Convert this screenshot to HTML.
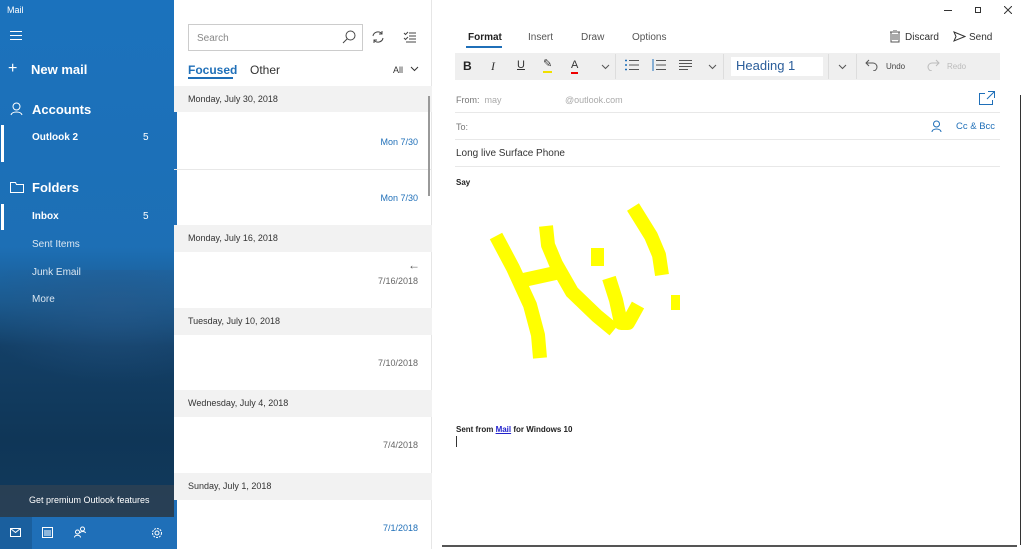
<!DOCTYPE html>
<html><head><meta charset="utf-8"><style>
*{margin:0;padding:0;box-sizing:border-box}
body{width:1024px;height:549px;overflow:hidden;font-family:"Liberation Sans",sans-serif;background:#fff;position:relative}
.a{position:absolute}
#nav{left:0;top:0;width:174px;height:549px;background:linear-gradient(180deg,#1b72bd 0%,#1d6fb5 45%,#1a5a8f 55%,#133f66 63%,#0f3657 80%,#123b5e 100%);color:#fff;overflow:hidden}
#nav .a{white-space:nowrap}
#list{left:174px;top:0;width:258px;height:549px;background:#fff;border-right:1px solid #e6e6e6}
.hdr{position:absolute;left:0;width:258px;background:#f2f2f2;font-size:9px;color:#333;padding-left:14px}
.date{position:absolute;right:13px;font-size:9px;color:#666}
.sep{position:absolute;left:0;width:258px;height:1px;background:#e8e8e8}
</style></head><body>
<div id="nav" class="a">
 <div class="a" style="left:-40px;top:270px;width:260px;height:120px;background:radial-gradient(ellipse at 60% 30%,rgba(40,90,140,.6) 0%,rgba(20,60,100,0) 65%)"></div>
 <div class="a" style="left:7px;top:5px;font-size:9px">Mail</div>
 <div class="a" style="left:10px;top:31px;width:12px;height:1px;background:#fff;box-shadow:0 4px 0 #fff,0 8px 0 #fff"></div>
 <div class="a" style="left:8px;top:60px;font-size:16px;font-weight:300">+</div>
 <div class="a" style="left:31px;top:62px;font-size:13px;font-weight:bold">New mail</div>
 <svg class="a" style="left:10px;top:102px" width="13" height="14"><circle cx="6.5" cy="4.5" r="3.5" fill="none" stroke="#fff"/><path d="M1 13c1-4 10-4 11 0" fill="none" stroke="#fff"/></svg>
 <div class="a" style="left:32px;top:102px;font-size:13px;font-weight:bold">Accounts</div>
 <div class="a" style="left:1px;top:125px;width:3px;height:37px;background:#fff"></div>
 <div class="a" style="left:32px;top:132px;font-size:10px;font-weight:bold">Outlook 2</div>
 <div class="a" style="left:143px;top:132px;font-size:10px">5</div>
 <svg class="a" style="left:10px;top:181px" width="14" height="12"><path d="M.5 1.5h5l1 2h7v8H.5z" fill="none" stroke="#fff"/></svg>
 <div class="a" style="left:32px;top:180px;font-size:13px;font-weight:bold">Folders</div>
 <div class="a" style="left:1px;top:204px;width:3px;height:26px;background:#fff"></div>
 <div class="a" style="left:32px;top:211px;font-size:10px;font-weight:bold">Inbox</div>
 <div class="a" style="left:143px;top:211px;font-size:10px">5</div>
 <div class="a" style="left:32px;top:239px;font-size:10px;color:#dbe7f2">Sent Items</div>
 <div class="a" style="left:32px;top:267px;font-size:10px;color:#dbe7f2">Junk Email</div>
 <div class="a" style="left:32px;top:294px;font-size:10px;color:#dbe7f2">More</div>
 <div class="a" style="left:0;top:485px;width:174px;height:32px;background:rgba(60,70,80,.55)"></div>
 <div class="a" style="left:29px;top:495px;font-size:9px">Get premium Outlook features</div>
 <div class="a" style="left:0;top:517px;width:174px;height:32px;background:#1f6fb8"></div>
 <div class="a" style="left:0;top:517px;width:32px;height:32px;background:#1a5f9e"></div>
 <svg class="a" style="left:10px;top:528px" width="11" height="9"><rect x=".5" y=".5" width="10" height="8" fill="none" stroke="#fff"/><path d="M.5 .5l5 4 5-4" fill="none" stroke="#fff"/></svg>
 <svg class="a" style="left:42px;top:527px" width="11" height="11"><rect x=".5" y=".5" width="10" height="10" fill="none" stroke="#fff"/><path d="M2 4h7M2 6h7M2 8h7" stroke="#fff"/></svg>
 <svg class="a" style="left:74px;top:526px" width="12" height="12"><circle cx="3.5" cy="6" r="2" fill="none" stroke="#fff"/><path d="M0.5 11.5c0-3 6-3 6 0" fill="none" stroke="#fff"/><circle cx="8.5" cy="3" r="2" fill="none" stroke="#fff"/><path d="M6 7c.5-2 5-2 5.5 0" fill="none" stroke="#fff"/></svg>
 <svg class="a" style="left:151px;top:527px" width="12" height="12"><circle cx="6" cy="6" r="4.5" fill="none" stroke="#fff" stroke-dasharray="2 1"/><circle cx="6" cy="6" r="2" fill="none" stroke="#fff"/></svg>
</div>

<div id="list" class="a">
 <div class="a" style="left:14px;top:24px;width:175px;height:27px;border:1px solid #ccc;font-size:10px;color:#888;padding:8px 8px">Search</div>
 <svg class="a" style="left:168px;top:30px" width="14" height="14"><circle cx="8.5" cy="5.5" r="4.5" fill="none" stroke="#444"/><path d="M5.5 8.5L1 13" stroke="#444"/></svg>
 <svg class="a" style="left:197px;top:30px" width="14" height="14"><path d="M2 6a5 5 0 0 1 9-2M12 8a5 5 0 0 1-9 2" fill="none" stroke="#444"/><path d="M11 1v3h-3M3 13v-3h3" fill="none" stroke="#444"/></svg>
 <svg class="a" style="left:229px;top:31px" width="14" height="12"><path d="M1 2l1.5 1.5L5 1M1 7l1.5 1.5L5 6M6 2h7M6 5h7M6 8h7M3 11h10" fill="none" stroke="#444"/></svg>
 <div class="a" style="left:14px;top:63px;font-size:12px;color:#1f6fb8;font-weight:bold">Focused</div>
 <div class="a" style="left:14px;top:77px;width:45px;height:2px;background:#1f6fb8"></div>
 <div class="a" style="left:76px;top:63px;font-size:12px;color:#333">Other</div>
 <div class="a" style="left:219px;top:65px;font-size:9px;color:#333">All</div>
 <svg class="a" style="left:236px;top:66px" width="9" height="6"><path d="M1 1l3.5 3.5L8 1" fill="none" stroke="#333"/></svg>
 <div class="hdr" style="top:86px;height:26px;line-height:26px">Monday, July 30, 2018</div>
 <div class="a" style="left:0;top:112px;width:3px;height:113px;background:#1f6fb8"></div>
 <div class="date" style="top:137px;color:#1f6fb8">Mon 7/30</div>
 <div class="sep" style="top:169px"></div>
 <div class="date" style="top:193px;color:#1f6fb8">Mon 7/30</div>
 <div class="a" style="left:254px;top:96px;width:2px;height:100px;background:#999"></div>
 <div class="hdr" style="top:225px;height:27px;line-height:27px">Monday, July 16, 2018</div>
 <div class="a" style="left:234px;top:258px;font-size:12px;color:#555">←</div>
 <div class="date" style="top:276px">7/16/2018</div>
 <div class="hdr" style="top:308px;height:27px;line-height:27px">Tuesday, July 10, 2018</div>
 <div class="date" style="top:358px">7/10/2018</div>
 <div class="hdr" style="top:390px;height:27px;line-height:27px">Wednesday, July 4, 2018</div>
 <div class="date" style="top:440px">7/4/2018</div>
 <div class="hdr" style="top:473px;height:27px;line-height:27px">Sunday, July 1, 2018</div>
 <div class="a" style="left:0;top:500px;width:3px;height:49px;background:#1f6fb8"></div>
 <div class="date" style="top:523px;color:#1f6fb8">7/1/2018</div>
</div>

<div class="a" style="left:944px;top:10px;width:8px;height:1px;background:#333"></div>
<div class="a" style="left:975px;top:7px;width:6px;height:6px;border:1px solid #333"></div>
<svg class="a" style="left:1004px;top:6px" width="8" height="8"><path d="M0 0l8 8M8 0L0 8" stroke="#333"/></svg>
<div class="a" style="left:468px;top:32px;font-size:10px;color:#222;font-weight:bold">Format</div>
<div class="a" style="left:466px;top:46px;width:36px;height:2px;background:#1f6fb8"></div>
<div class="a" style="left:528px;top:32px;font-size:10px;color:#555">Insert</div>
<div class="a" style="left:581px;top:32px;font-size:10px;color:#555">Draw</div>
<div class="a" style="left:632px;top:32px;font-size:10px;color:#555">Options</div>
<svg class="a" style="left:890px;top:30px" width="10" height="13"><rect x="1" y="2" width="8" height="10" fill="none" stroke="#555"/><path d="M0 2h10M3 0h4M3 4v6M5 4v6M7 4v6" stroke="#555"/></svg>
<div class="a" style="left:905px;top:32px;font-size:10px;color:#333">Discard</div>
<svg class="a" style="left:953px;top:31px" width="13" height="11"><path d="M1 1l11 4.5L1 10l2-4.5z" fill="none" stroke="#333"/></svg>
<div class="a" style="left:969px;top:32px;font-size:10px;color:#333">Send</div>

<div class="a" style="left:455px;top:53px;width:545px;height:27px;background:#efefef"></div>
<div class="a" style="left:463px;top:59px;font-size:12px;font-weight:bold;color:#222">B</div>
<div class="a" style="left:491px;top:59px;font-size:12px;font-style:italic;font-family:'Liberation Serif',serif;color:#333">I</div>
<div class="a" style="left:517px;top:59px;font-size:11px;text-decoration:underline;color:#333">U</div>
<div class="a" style="left:543px;top:58px;font-size:11px;color:#333;border-bottom:2px solid #f0e000;line-height:13px">✎</div>
<div class="a" style="left:571px;top:59px;font-size:11px;color:#333;border-bottom:2px solid #e00;line-height:13px">A</div>
<svg class="a" style="left:601px;top:64px" width="9" height="6"><path d="M1 1l3.5 3.5L8 1" fill="none" stroke="#555"/></svg>
<div class="a" style="left:615px;top:54px;width:1px;height:25px;background:#ddd"></div>
<svg class="a" style="left:625px;top:59px" width="14" height="12"><path d="M4 1.5h10M4 6h10M4 10.5h10" stroke="#555"/><path d="M0 1.5h2M0 6h2M0 10.5h2" stroke="#1f6fb8" stroke-width="1.5"/></svg>
<svg class="a" style="left:652px;top:59px" width="14" height="12"><path d="M4 1.5h10M4 6h10M4 10.5h10" stroke="#555"/><path d="M1 0v12" stroke="#1f6fb8"/></svg>
<svg class="a" style="left:679px;top:59px" width="13" height="12"><path d="M0 1.5h13M0 4.5h13M0 7.5h13M0 10.5h9" stroke="#555"/></svg>
<svg class="a" style="left:708px;top:64px" width="9" height="6"><path d="M1 1l3.5 3.5L8 1" fill="none" stroke="#555"/></svg>
<div class="a" style="left:723px;top:54px;width:1px;height:25px;background:#ddd"></div>
<div class="a" style="left:731px;top:57px;width:92px;height:19px;background:#fff;font-size:13px;color:#2a5d9a;padding:1px 5px">Heading 1</div>
<div class="a" style="left:828px;top:54px;width:1px;height:25px;background:#ddd"></div>
<svg class="a" style="left:838px;top:64px" width="9" height="6"><path d="M1 1l3.5 3.5L8 1" fill="none" stroke="#555"/></svg>
<div class="a" style="left:856px;top:54px;width:1px;height:25px;background:#ddd"></div>
<svg class="a" style="left:865px;top:59px" width="13" height="12"><path d="M4 1L1 4l3 3M1 4h7a4 4 0 0 1 0 8" fill="none" stroke="#555"/></svg>
<div class="a" style="left:886px;top:62px;font-size:8px;color:#444">Undo</div>
<svg class="a" style="left:927px;top:59px" width="13" height="12"><path d="M9 1l3 3-3 3M12 4H5a4 4 0 0 0 0 8" fill="none" stroke="#bbb"/></svg>
<div class="a" style="left:947px;top:62px;font-size:8px;color:#bbb">Redo</div>

<div class="a" style="left:456px;top:95px;font-size:9px;color:#777">From: <span style="color:#aaa">&nbsp;may</span></div>
<div class="a" style="left:565px;top:95px;font-size:9px;color:#aaa">@outlook.com</div>
<svg class="a" style="left:979px;top:91px" width="16" height="14"><path d="M9 .5h6.5V7M15.5.5L8 8M6 2.5H.5v11h13V9" fill="none" stroke="#1f6fb8"/></svg>
<div class="a" style="left:455px;top:112px;width:545px;height:1px;background:#e8e8e8"></div>
<div class="a" style="left:456px;top:122px;font-size:9px;color:#777">To:</div>
<svg class="a" style="left:931px;top:120px" width="11" height="12"><circle cx="5.5" cy="4" r="3" fill="none" stroke="#1f6fb8"/><path d="M1 12c0-4 9-4 9 0" fill="none" stroke="#1f6fb8"/></svg>
<div class="a" style="left:956px;top:121px;font-size:9.5px;color:#1f6fb8">Cc &amp; Bcc</div>
<div class="a" style="left:455px;top:139px;width:545px;height:1px;background:#e8e8e8"></div>
<div class="a" style="left:456px;top:148px;font-size:10px;color:#333">Long live Surface Phone</div>
<div class="a" style="left:455px;top:166px;width:545px;height:1px;background:#e8e8e8"></div>
<div class="a" style="left:456px;top:178px;font-size:8px;color:#222;font-weight:bold">Say</div>
<div class="a" style="left:1020px;top:95px;width:1px;height:450px;background:#333"></div>

<svg class="a" style="left:0;top:0" width="1024" height="549">
<g fill="none" stroke="#ffff00" stroke-width="14" stroke-linejoin="round">
<path d="M496 236L513 268L530 305L538 335L540 358"/>
<path d="M546 226L548 245L556 264L572 292L597 316L614 330"/>
<path d="M519 281L560 272"/>
<path d="M609 278L616 300L621 323L628 323L638 305"/>
<path d="M633 207L651 236L659 255L662 275"/>
</g>
<rect x="591" y="248" width="13" height="18" fill="#ffff00"/>
<rect x="671" y="295" width="9" height="15" fill="#ffff00"/>
</svg>

<div class="a" style="left:456px;top:425px;font-size:8px;color:#222;font-weight:bold">Sent from <span style="color:#22c;text-decoration:underline">Mail</span> for Windows 10</div>
<div class="a" style="left:456px;top:436px;width:1px;height:11px;background:#333"></div>
<div class="a" style="left:442px;top:545px;width:575px;height:2px;background:#555"></div>
</body></html>
